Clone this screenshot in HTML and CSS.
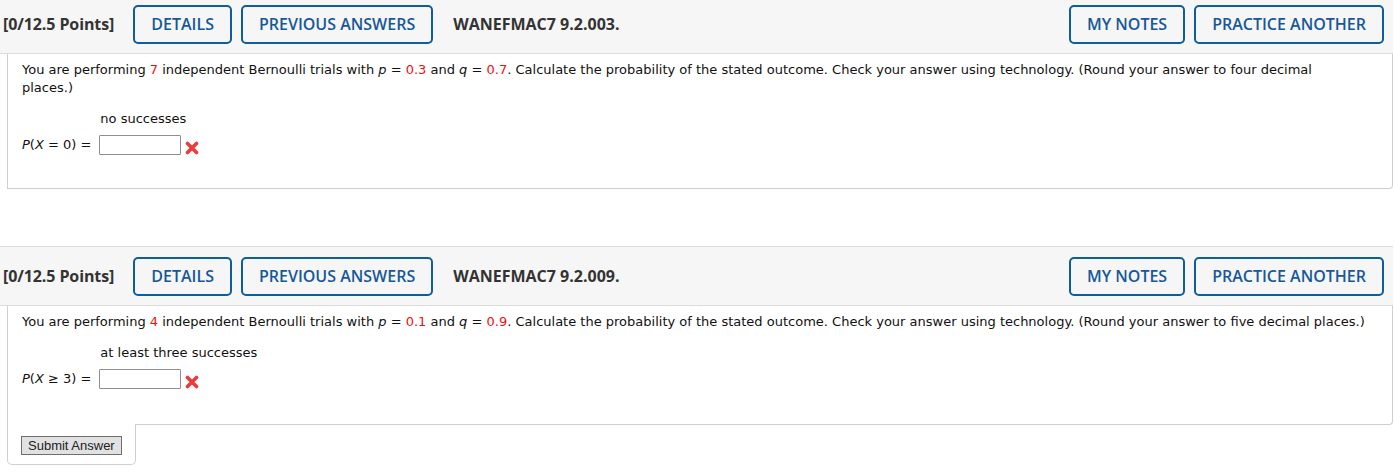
FILE: index.html
```html
<!DOCTYPE html>
<html lang="en">
<head>
    <meta charset="UTF-8">
    <title>WebAssign - Binomial questions</title>
    <link rel="stylesheet" href="styles.css">
</head>
<body>
    <div class="question first">
        <div class="q-header">
            <span class="points">[0/12.5 Points]</span>
            <button class="hbtn">DETAILS</button>
            <button class="hbtn">PREVIOUS ANSWERS</button>
            <span class="q-id">WANEFMAC7 9.2.003.</span>
            <span class="spacer"></span>
            <button class="hbtn">MY NOTES</button>
            <button class="hbtn">PRACTICE ANOTHER</button>
        </div>
        <div class="q-body">
            <p class="prompt">You are performing <span class="num">7</span> independent Bernoulli trials with <i>p</i> = <span class="num">0.3</span> and <i>q</i> = <span class="num">0.7</span>. Calculate the probability of the stated outcome. Check your answer using technology. (Round your answer to four decimal places.)</p>
            <div class="part">
                <span></span>
                <span class="outcome">no successes</span>
                <span class="expr"><i>P</i>(<i>X</i> = 0) =</span>
                <span class="answer">
                    <input type="text" class="box">
                    <svg class="wrong" width="14" height="14" viewBox="0 0 14 14"><path d="M2.5 2.5 L11.5 11.5 M11.5 2.5 L2.5 11.5" stroke="#ee3b3b" stroke-width="3.6" stroke-linecap="round"/></svg>
                </span>
            </div>
        </div>
    </div>

    <div class="question">
        <div class="q-header">
            <span class="points">[0/12.5 Points]</span>
            <button class="hbtn">DETAILS</button>
            <button class="hbtn">PREVIOUS ANSWERS</button>
            <span class="q-id">WANEFMAC7 9.2.009.</span>
            <span class="spacer"></span>
            <button class="hbtn">MY NOTES</button>
            <button class="hbtn">PRACTICE ANOTHER</button>
        </div>
        <div class="q-body last">
            <p class="prompt">You are performing <span class="num">4</span> independent Bernoulli trials with <i>p</i> = <span class="num">0.1</span> and <i>q</i> = <span class="num">0.9</span>. Calculate the probability of the stated outcome. Check your answer using technology. (Round your answer to five decimal places.)</p>
            <div class="part">
                <span></span>
                <span class="outcome">at least three successes</span>
                <span class="expr"><i>P</i>(<i>X</i> &ge; 3) =</span>
                <span class="answer">
                    <input type="text" class="box">
                    <svg class="wrong" width="14" height="14" viewBox="0 0 14 14"><path d="M2.5 2.5 L11.5 11.5 M11.5 2.5 L2.5 11.5" stroke="#ee3b3b" stroke-width="3.6" stroke-linecap="round"/></svg>
                </span>
            </div>
        </div>
        <div class="submit-tab">
            <button class="submit">Submit Answer</button>
        </div>
    </div>
</body>
</html>
```

FILE: styles.css
```css
body {
    margin: 0;
    background-color: #fff;
    font-family: "DejaVu Sans", Verdana, sans-serif;
    font-size: 13px;
    color: #111;
}
.question {
    width: 1393px;
    margin-bottom: 57px;
}
.question.first {
    margin-top: -6px;
}
.question:last-child {
    margin-bottom: 0;
}
.q-header {
    display: flex;
    align-items: center;
    gap: 9px;
    height: 58px;
    padding: 0 9px 0 3px;
    background-color: #f6f6f6;
    border-top: 1px solid #dcdcdc;
    border-bottom: 1px solid #dcdcdc;
    font-family: "Open Sans", sans-serif;
}
.points {
    font-size: 16px;
    font-weight: 700;
    color: #333;
    margin-right: 10px;
    letter-spacing: -0.1px;
}
.hbtn {
    height: 39px;
    padding: 0 16px;
    background-color: #f6f6f6;
    border: 2px solid #0d5e9b;
    border-radius: 5px;
    font-family: "Open Sans", sans-serif;
    font-size: 16px;
    font-weight: 600;
    color: #17589a;
}
.q-id {
    font-size: 16px;
    font-weight: 700;
    color: #333;
    margin-left: 11px;
}
.spacer {
    flex: 1;
}
.q-body {
    margin-left: 7px;
    padding: 7px 27px 33px 14px;
    border-left: 1px solid #cfcfcf;
    border-right: 1px solid #cfcfcf;
    border-bottom: 1px solid #cfcfcf;
    border-bottom-right-radius: 4px;
    line-height: 18px;
}
.q-body.last {
    padding-bottom: 35px;
}
.prompt {
    margin: 0;
}
.num {
    color: #f01010;
}
.part {
    display: grid;
    grid-template-columns: auto auto;
    justify-content: start;
    column-gap: 8px;
    row-gap: 7px;
    margin-top: 13px;
}
.outcome {
    padding-left: 1px;
}
.expr {
    align-self: center;
}
.answer {
    display: flex;
    align-items: center;
    gap: 4px;
}
.box {
    width: 78px;
    height: 16px;
    margin: 0;
    padding: 1px;
    border: 1px solid #8f8f8f;
    border-radius: 1px;
    background-color: #fff;
}
.wrong {
    margin-top: 6px;
}
.submit-tab {
    position: relative;
    width: 114px;
    margin-left: 7px;
    margin-top: -1px;
    padding: 12px 0 9px 13px;
    background-color: #fff;
    border-left: 1px solid #cfcfcf;
    border-right: 1px solid #cfcfcf;
    border-bottom: 1px solid #cfcfcf;
    border-radius: 0 0 5px 5px;
}
.submit {
    display: block;
    padding: 1px 6px;
    background-color: #e1e1e1;
    border: 1px solid #6f6f6f;
    border-radius: 0;
    font-family: "Liberation Sans", Arial, sans-serif;
    font-size: 13px;
    color: #222;
}
```
